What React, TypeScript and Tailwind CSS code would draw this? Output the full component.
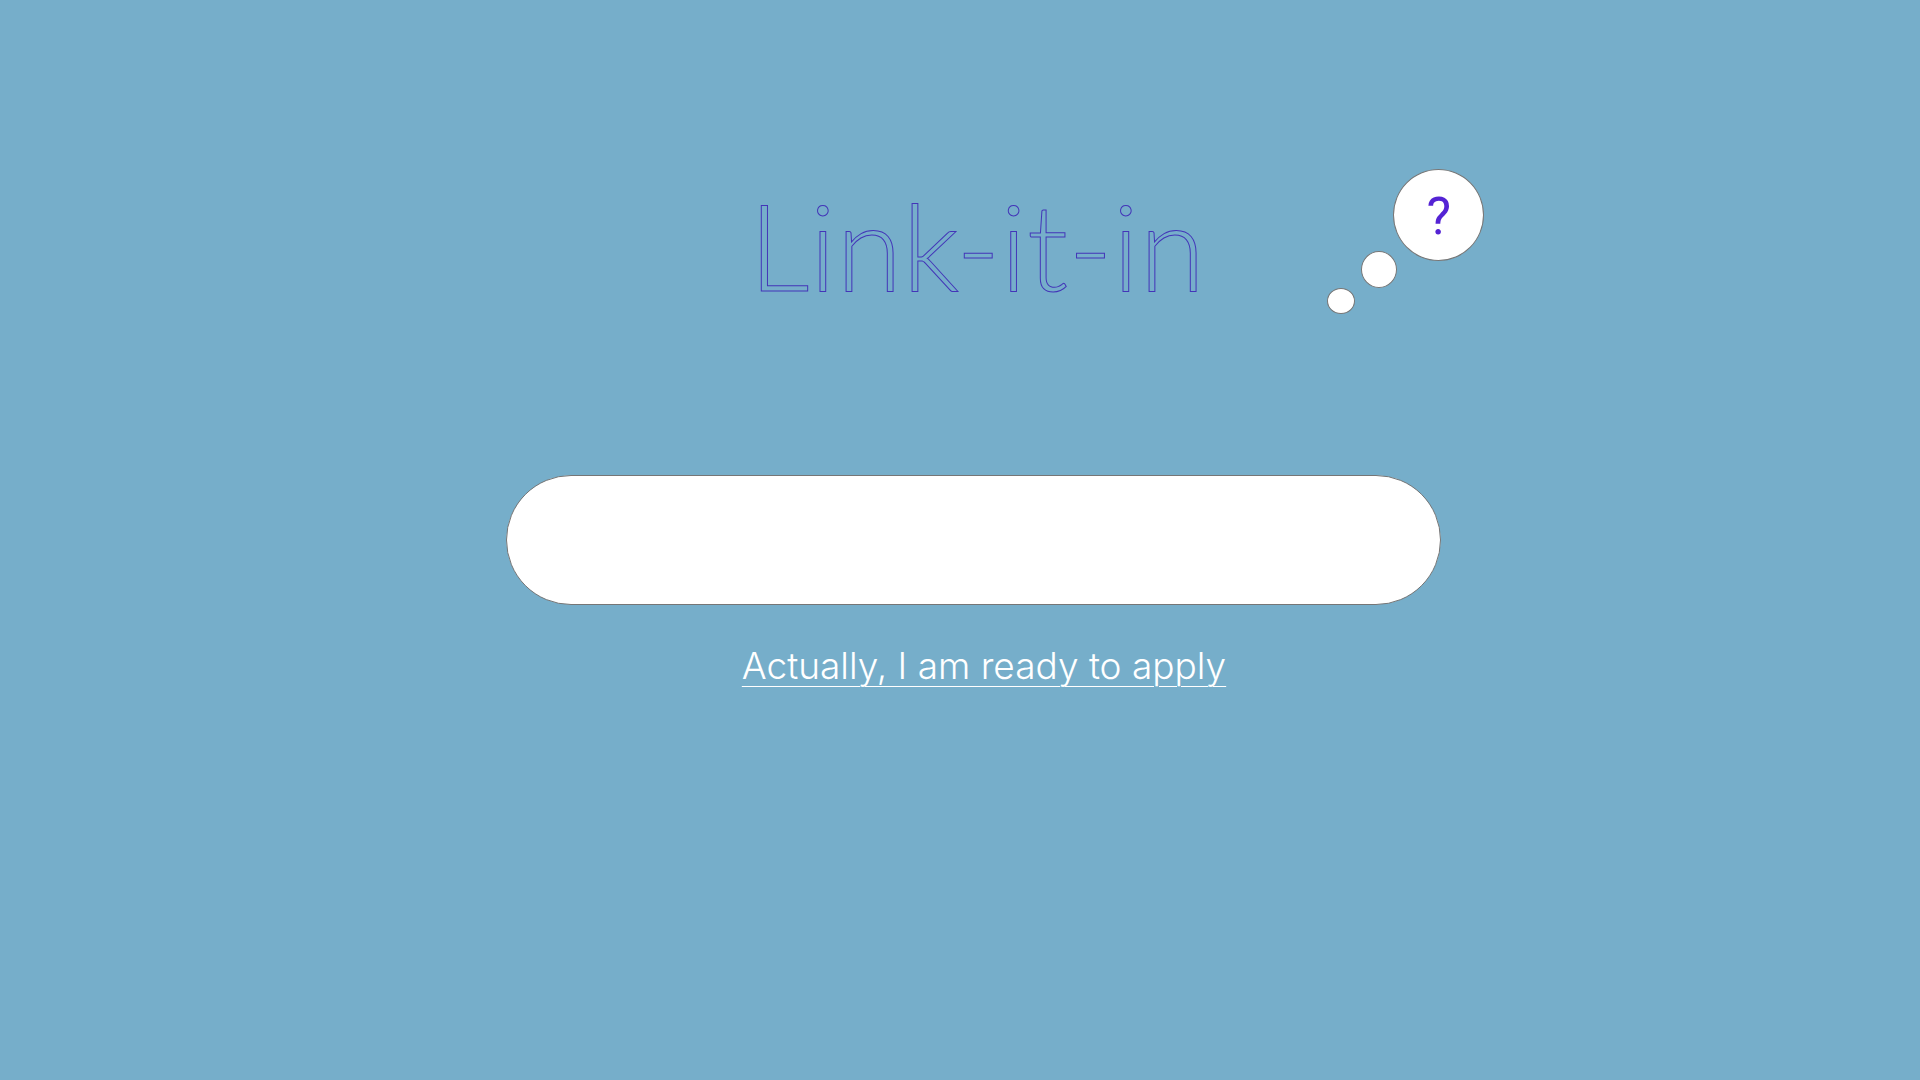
import { useState } from "react";

function ThoughtBubble() {
    return (
        <div className="flex items-end">
            <span className="h-[26px] w-7 rounded-[50%] border border-[#767676] bg-white" />
            <span className="mb-[26px] ml-[6px] h-[37px] w-9 rounded-[50%] border border-[#767676] bg-white" />
            <button
                type="button"
                className="-ml-1 mb-[53px] h-[92px] w-[91px] rounded-[50%] border border-[#767676] bg-white pt-1 font-['Roboto',sans-serif] text-[52px] leading-none text-[#5423d4]"
            >
                ?
            </button>
        </div>
    );
}

export default function App() {
    const [link, setLink] = useState("");

    return (
        <main className="flex min-h-screen flex-col items-center bg-[#76aeca] pt-[169px] pl-[26px]">
            <header className="grid w-full grid-cols-[1fr_auto_1fr]">
                <h1 className="col-start-2 pl-2 font-['Lato',sans-serif] text-[120px] leading-[152px] font-light text-transparent [-webkit-text-stroke:1px_#4335b8]">
                    Link-it-in
                </h1>
                <div className="ml-[122px] h-[145px]">
                    <ThoughtBubble />
                </div>
            </header>

            <input
                type="text"
                aria-label="Link"
                value={link}
                onChange={(e) => setLink(e.target.value)}
                className="mt-[154px] h-[130px] w-[935px] max-w-full rounded-full border border-[#767676] bg-white px-16 text-[40px] outline-none"
            />

            <a
                href="#apply"
                className="mt-9 ml-[22px] font-['Inter',sans-serif] text-[37px] leading-[50px] font-light text-white underline decoration-1 underline-offset-[7px]"
            >
                Actually, I am ready to apply
            </a>
        </main>
    );
}
